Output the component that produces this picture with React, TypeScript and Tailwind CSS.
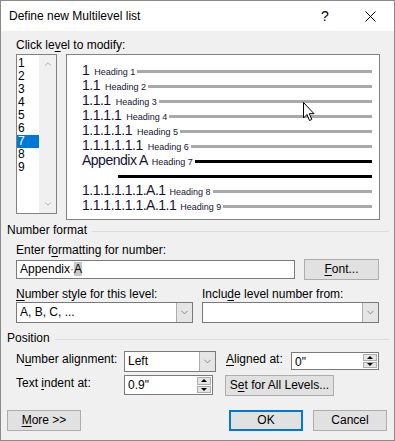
import { ChevronDown, ChevronUp } from 'lucide-react'

const levels = ['1', '2', '3', '4', '5', '6', '7', '8', '9']

const previewRows = [
  { num: '1', head: 'Heading 1' },
  { num: '1.1', head: 'Heading 2' },
  { num: '1.1.1', head: 'Heading 3' },
  { num: '1.1.1.1', head: 'Heading 4' },
  { num: '1.1.1.1.1', head: 'Heading 5' },
  { num: '1.1.1.1.1.1', head: 'Heading 6' },
]

function Ul({ children }: { children: string }) {
  return <span className="underline underline-offset-2">{children}</span>
}

// combobox with the grey drop button on the right
function Select({ value, className }: { value?: string; className: string }) {
  return (
    <div className={`flex h-[21px] border border-[#7a7a7a] bg-white ${className}`}>
      <div className="flex-1 pl-[3px] leading-[19px]">{value}</div>
      <div className="flex w-[16px] items-center justify-center border-l border-[#adadad] bg-[#e5e5e5]">
        <ChevronDown className="h-[11px] w-[11px] text-[#606060]" strokeWidth={1.5} />
      </div>
    </div>
  )
}

function Spin({ value, className }: { value: string; className: string }) {
  return (
    <div className={`flex border border-[#7a7a7a] bg-white ${className}`}>
      <div className="flex-1 pl-[3px] pt-[2px]">{value}</div>
      <div className="flex w-[16px] flex-col gap-[1px] p-[1px]">
        <div className="flex flex-1 items-center justify-center border border-[#adadad] bg-[#e5e5e5]">
          <div className="h-0 w-0 border-x-[3px] border-b-[3px] border-x-transparent border-b-black" />
        </div>
        <div className="flex flex-1 items-center justify-center border border-[#adadad] bg-[#e5e5e5]">
          <div className="h-0 w-0 border-x-[3px] border-t-[3px] border-x-transparent border-t-black" />
        </div>
      </div>
    </div>
  )
}

function Button({ children, className = '' }: { children: React.ReactNode; className?: string }) {
  return (
    <div className={`flex h-[21px] items-center justify-center border border-[#adadad] bg-[#e1e1e1] ${className}`}>
      {children}
    </div>
  )
}

export default function App() {
  return (
    <div className="flex h-[441px] w-[395px] flex-col border border-[#8a8a8a] bg-[#f0f0f0] font-['Liberation_Sans',Arial,sans-serif] text-[12px] leading-[15px] text-black">
      {/* title bar */}
      <div className="flex h-[30px] items-center bg-white pl-[8px]">
        <span className="flex-1">Define new Multilevel list</span>
        <span className="w-[20px] text-center text-[14px]">?</span>
        <div className="ml-[25px] mr-[14px] flex h-[20px] w-[20px] items-center justify-center">
          <svg width="11" height="11" viewBox="0 0 11 11">
            <path d="M0.5 0.5 L10.5 10.5 M10.5 0.5 L0.5 10.5" stroke="#000" strokeWidth="1" />
          </svg>
        </div>
      </div>

      <div className="mt-[7px] pl-[15px]">
        Click le<Ul>v</Ul>el to modify:
      </div>

      <div className="mt-[1px] flex pl-[15px]">
        {/* level list */}
        <div className="flex h-[160px] w-[41px] border border-[#828282] bg-white">
          <div className="flex-1 pt-[2px]">
            {levels.map((l) => (
              <div
                key={l}
                className={`h-[13px] pl-[1px] leading-[13px] ${l === '7' ? 'bg-[#0078d7] text-white' : ''}`}
              >
                {l}
              </div>
            ))}
          </div>
          <div className="flex w-[17px] flex-col items-center justify-between bg-[#f0f0f0] py-[4px]">
            <ChevronUp className="h-[10px] w-[10px] text-[#a6a6a6]" strokeWidth={2} />
            <ChevronDown className="h-[10px] w-[10px] text-[#a6a6a6]" strokeWidth={2} />
          </div>
        </div>

        {/* preview */}
        <div className="relative ml-[9px] h-[166px] w-[314px] border border-[#828282] bg-white pl-[15px] pr-[7px] pt-[8px] font-['Liberation_Sans',Arial,sans-serif] text-[#141432]">
          {previewRows.map((r) => (
            <div key={r.head} className="flex h-[15px] items-center">
              <span className="text-[14px] leading-[15px] tracking-[-0.5px]">{r.num}</span>
              <span className="ml-[5px] mt-[3px] text-[9px] leading-[10px]">{r.head}</span>
              <div className="ml-[2px] mt-[2px] h-[3px] flex-1 bg-[#a9a9a9]" />
            </div>
          ))}
          <div className="flex h-[15px] items-center">
            <span className="text-[14px] leading-[15px] tracking-[-0.5px]">Appendix A</span>
            <span className="ml-[4px] mt-[3px] text-[9px] leading-[10px]">Heading 7</span>
            <div className="ml-[2px] mt-[2px] h-[3px] flex-1 bg-black" />
          </div>
          <div className="flex h-[15px] items-center pl-[36px]">
            <div className="mt-[2px] h-[3px] flex-1 bg-black" />
          </div>
          <div className="flex h-[15px] items-center">
            <span className="text-[14px] leading-[15px] tracking-[-0.5px]">1.1.1.1.1.1.A.1</span>
            <span className="ml-[4px] mt-[3px] text-[9px] leading-[10px]">Heading 8</span>
            <div className="ml-[2px] mt-[2px] h-[3px] flex-1 bg-[#a9a9a9]" />
          </div>
          <div className="flex h-[15px] items-center">
            <span className="text-[14px] leading-[15px] tracking-[-0.5px]">1.1.1.1.1.1.A.1.1</span>
            <span className="ml-[4px] mt-[3px] text-[9px] leading-[10px]">Heading 9</span>
            <div className="ml-[2px] mt-[2px] h-[3px] flex-1 bg-[#a9a9a9]" />
          </div>

          {/* mouse pointer */}
          <svg className="absolute left-[236px] top-[47px]" width="13" height="20" viewBox="0 0 13 20">
            <path
              d="M0.5 0.5 L0.5 16 L4 12.5 L6.5 18.5 L8.8 17.5 L6.3 11.7 L11 11.7 Z"
              fill="#fff"
              stroke="#000"
              strokeWidth="1"
              strokeLinejoin="miter"
            />
          </svg>
        </div>
      </div>

      {/* number format */}
      <div className="mt-[3px] flex items-center pl-[6px] pr-[5px]">
        <span>Number format</span>
        <div className="ml-[5px] mt-[1px] h-px flex-1 bg-[#dcdcdc]" />
      </div>

      <div className="mt-[5px] pl-[15px]">
        Enter f<Ul>o</Ul>rmatting for number:
      </div>
      <div className="mt-[1px] flex items-center pl-[15px]">
        <div className="h-[19px] w-[279px] border border-[#7a7a7a] bg-white pl-[3px] leading-[17px]">
          Appendix<span className="text-[#777]">·</span>
          <span className="bg-[#c8c8c8]">A</span>
        </div>
        <Button className="ml-[9px] w-[75px]">
          <Ul>F</Ul>ont...
        </Button>
      </div>

      <div className="mt-[7px] flex pl-[15px]">
        <div className="w-[186px]">
          <Ul>N</Ul>umber style for this level:
        </div>
        <div>
          Inclu<Ul>d</Ul>e level number from:
        </div>
      </div>
      <div className="flex pl-[15px]">
        <Select value="A, B, C, ..." className="w-[177px]" />
        <Select className="ml-[9px] w-[177px]" />
      </div>

      {/* position */}
      <div className="mt-[8px] flex items-center pl-[6px] pr-[5px]">
        <span>Position</span>
        <div className="ml-[5px] mt-[1px] h-px flex-1 bg-[#dcdcdc]" />
      </div>

      <div className="mt-[5px] flex pl-[15px]">
        <div className="w-[108px] pt-[1px]">
          N<Ul>u</Ul>mber alignment:
        </div>
        <Select value="Left" className="w-[92px]" />
        <div className="ml-[10px] w-[65px] pt-[1px]">
          <Ul>A</Ul>ligned at:
        </div>
        <Spin value={'0"'} className="mt-[1px] h-[18px] w-[88px]" />
      </div>

      <div className="mt-[3px] flex pl-[15px]">
        <div className="w-[108px] pt-[1px]">
          Text <Ul>i</Ul>ndent at:
        </div>
        <Spin value={'0.9"'} className="h-[20px] w-[89px]" />
        <Button className="ml-[12px] h-[21px] w-[109px]">
          S<Ul>e</Ul>t for All Levels...
        </Button>
      </div>

      <div className="mt-[14px] flex pl-[6px]">
        <Button className="w-[74px]">
          <Ul>M</Ul>ore &gt;&gt;
        </Button>
        <div className="flex-1" />
        <div className="flex h-[21px] w-[74px] items-center justify-center border-2 border-[#0078d7] bg-[#e1e1e1]">
          OK
        </div>
        <Button className="ml-[10px] mr-[7px] w-[74px]">Cancel</Button>
      </div>
    </div>
  )
}
